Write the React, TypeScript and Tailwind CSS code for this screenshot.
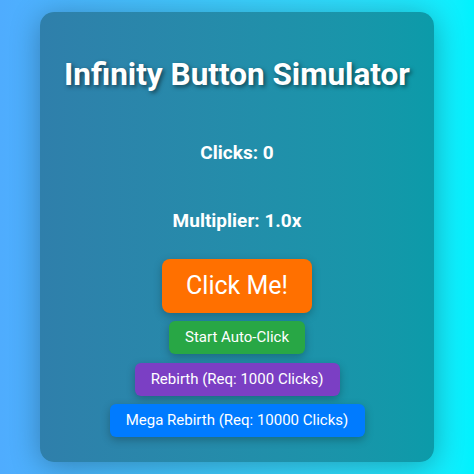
export default function App() {
  return (
    <div className="h-screen w-full flex px-10 py-3 bg-gradient-to-r from-[#4facfe] to-[#00f2fe] font-['Roboto',sans-serif] text-white">
      <div className="flex-1 flex flex-col items-center rounded-[14px] bg-gradient-to-r from-[#2f7fab] to-[#0b9ba9] shadow-[0_4px_30px_rgba(0,0,0,0.3)] pt-[44px]">
        <h1 className="text-[31.5px] leading-[38px] font-bold [text-shadow:2px_2px_4px_rgba(0,0,0,0.5)]">
          Infinity Button Simulator
        </h1>

        <p className="mt-[48px] text-[19px] leading-[22px] font-bold">Clicks: 0</p>
        <p className="mt-[46px] text-[19px] leading-[22px] font-bold">Multiplier: 1.0x</p>

        <button className="mt-[27px] w-[150px] h-[54px] rounded-[8px] bg-[#ff7000] text-[25px] shadow-[0_3px_8px_rgba(0,0,0,0.25)]">
          Click Me!
        </button>
        <button className="mt-[8px] w-[136px] h-[33px] rounded-[6px] bg-[#28a745] text-[15px] shadow-[0_3px_8px_rgba(0,0,0,0.25)]">
          Start Auto-Click
        </button>
        <button className="mt-[9px] w-[205px] h-[33px] rounded-[6px] bg-[#7b3fc4] text-[15px] shadow-[0_3px_8px_rgba(0,0,0,0.25)]">
          Rebirth (Req: 1000 Clicks)
        </button>
        <button className="mt-[8px] w-[255px] h-[33px] rounded-[6px] bg-[#007bff] text-[15px] shadow-[0_3px_8px_rgba(0,0,0,0.25)]">
          Mega Rebirth (Req: 10000 Clicks)
        </button>
      </div>
    </div>
  )
}
